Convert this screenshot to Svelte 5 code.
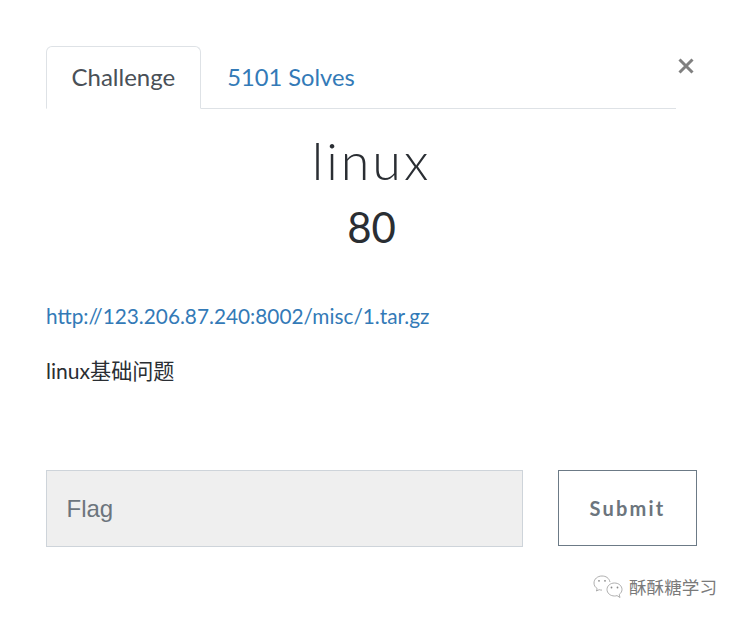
<script lang="ts">
  const link = "http://123.206.87.240:8002/misc/1.tar.gz";
</script>

<div class="modal">
  <div class="head">
    <ul class="tabs">
      <li class="tab active">Challenge</li>
      <li class="tab">5101 Solves</li>
    </ul>
    <svg class="close" width="18" height="18" viewBox="0 0 18 18" aria-label="Close">
      <path d="M2.5 2.5 L15.5 15.5 M15.5 2.5 L2.5 15.5" stroke="#808080" stroke-width="3" fill="none" />
    </svg>
  </div>

  <h2 class="name">linux</h2>
  <h3 class="value">80</h3>

  <p class="link"><a href={link}>{link}</a></p>
  <p class="desc">linux基础问题</p>

  <form class="row">
    <input class="flag" placeholder="Flag" />
    <button class="submit" type="button">Submit</button>
  </form>

  <div class="watermark">
    <svg width="30" height="24" viewBox="0 0 30 24" fill="none" stroke="#9a9a9a" stroke-width="0.8">
      <path d="M17 7 C16 3 13 1 9 1 C4.500 1 1 4 1 8 C1 10.500 2.300 12.300 4.200 13.600 L3.400 16 L6.200 14.700 C7 15 8 15.100 9 15.100" />
      <path d="M29 14.500 C29 10.800 25.600 8 21.500 8 C17.400 8 14 10.800 14 14.500 C14 18.200 17.400 21 21.500 21 C22.400 21 23.300 20.900 24 20.600 L27 22.500 L26.200 19.500 C27.900 18.200 29 16.500 29 14.500 Z" />
      <circle cx="6" cy="5.800" r="0.9" fill="#8a8a8a" stroke="none" />
      <circle cx="12" cy="5.800" r="0.9" fill="#8a8a8a" stroke="none" />
      <circle cx="18.500" cy="12.500" r="0.9" fill="#8a8a8a" stroke="none" />
      <circle cx="24.500" cy="12.500" r="0.9" fill="#8a8a8a" stroke="none" />
    </svg>
    <span>酥酥糖学习</span>
  </div>
</div>

<style>
  :global(body) {
    background: #fff;
  }

  .modal {
    position: relative;
    box-sizing: border-box;
    width: 741px;
    height: 619px;
    padding: 46px 44px 0 46px;
    font-family: Lato, "Noto Sans CJK SC", sans-serif;
    color: #212529;
    overflow: hidden;
  }

  .head {
    display: flex;
    align-items: flex-start;
  }

  .tabs {
    display: flex;
    flex: 0 0 630px;
    height: 62px;
    margin: 0;
    padding: 0;
    list-style: none;
    border-bottom: 1px solid #dee2e6;
    box-sizing: content-box;
  }

  .tab {
    box-sizing: border-box;
    height: 63px;
    padding: 15px 25px 0;
    font-size: 23.7px;
    line-height: 30px;
    color: #337ab7;
    border: 1px solid transparent;
  }

  .tab.active {
    padding: 15px 25px 0 24.500px;
    font-size: 24px;
    color: #495057;
    background: #fff;
    border-color: #dee2e6 #dee2e6 #fff;
    border-radius: 6px 6px 0 0;
  }

  .close {
    margin: 11px 0 0 1px;
  }

  .name {
    margin: 21px 0 0;
    font-size: 52px;
    font-weight: 300;
    line-height: 60px;
    letter-spacing: 3px;
    text-align: center;
    color: #2a2e33;
  }

  .value {
    margin: 11px 0 0;
    font-size: 42px;
    font-weight: 400;
    line-height: 53px;
    text-align: center;
    color: #2a2e33;
  }

  .link {
    margin: 47px 0 0;
    font-size: 20.8px;
    line-height: 30px;
  }

  .link a {
    color: #337ab7;
    text-decoration: none;
  }

  .desc {
    margin: 25px 0 0;
    font-size: 21.1px;
    line-height: 30px;
    color: #2a2e33;
  }

  .row {
    display: flex;
    align-items: flex-start;
    margin-top: 84px;
  }

  .flag {
    box-sizing: border-box;
    width: 477px;
    height: 77px;
    padding: 0 19.500px;
    background: #efefef;
    border: 1px solid #ced4da;
    font-family: "Liberation Sans", sans-serif;
    font-size: 24px;
    outline: none;
  }

  .flag::placeholder {
    color: #6c757d;
    opacity: 1;
  }

  .submit {
    box-sizing: border-box;
    width: 139px;
    height: 76px;
    margin-left: 35px;
    background: #fff;
    border: 1px solid #6c7a86;
    border-radius: 0;
    color: #6c757d;
    font-family: Lato, sans-serif;
    font-size: 20px;
    font-weight: 700;
    letter-spacing: 2.2px;
  }

  .watermark {
    position: absolute;
    left: 593px;
    top: 575px;
    display: flex;
    align-items: center;
    gap: 6px;
    font-family: "Noto Sans CJK SC", sans-serif;
    font-size: 17.600px;
    line-height: 24px;
    color: #7a7a7a;
  }
</style>
